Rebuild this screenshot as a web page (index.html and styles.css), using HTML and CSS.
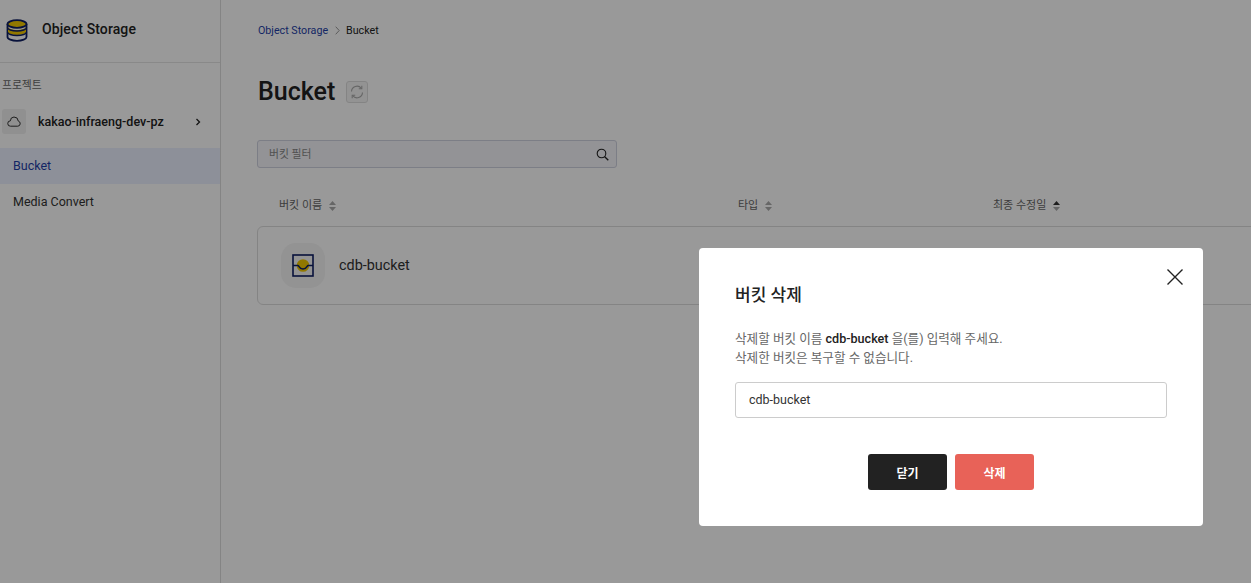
FILE: index.html
```html
<!DOCTYPE html>
<html lang="ko">

<head>
    <meta charset="UTF-8">
    <meta name="viewport" content="width=device-width, initial-scale=1.0">
    <title>Bucket</title>
    <link rel="stylesheet" href="styles.css">
</head>

<body>
    <div class="layout">
        <!-- Sidebar -->
        <aside class="sidebar">
            <div class="service">
                <svg class="service-icon" width="22" height="23" viewBox="0 0 22 23">
                    <path d="M1.500 5v13c0 2 4.300 3.800 9.500 3.800s9.500-1.800 9.500-3.800V5" fill="#fff" stroke="#0e1f63" stroke-width="1.800"/>
                    <path d="M2 8c1 2 5 3 9 3s8-1 9-3v5c-1 2-5 3-9 3s-9-1-9-3z" fill="#f2c800"/>
                    <path d="M1.500 13c0 2 4.300 3.500 9.500 3.500s9.500-1.500 9.500-3.500" fill="none" stroke="#0e1f63" stroke-width="1.500"/>
                    <path d="M1.500 8.500c0 2 4.300 3.500 9.500 3.500s9.500-1.500 9.500-3.500" fill="none" stroke="#0e1f63" stroke-width="1.500"/>
                    <ellipse cx="11" cy="5" rx="9.500" ry="3.800" fill="#f2c800" stroke="#0e1f63" stroke-width="1.800"/>
                </svg>
                <span>Object Storage</span>
            </div>
            <div class="project-label">프로젝트</div>
            <div class="project">
                <div class="project-icon">
                    <svg width="14" height="11" viewBox="0 0 14 11">
                        <path d="M3.500 10.200h7.200a2.600 2.600 0 0 0 .6-5.100A4.400 4.400 0 0 0 7 1a3.800 3.800 0 0 0-3.600 3.800A2.700 2.700 0 0 0 3.500 10.200z" fill="none" stroke="#333" stroke-width="1"/>
                    </svg>
                </div>
                <span class="project-name">kakao-infraeng-dev-pz</span>
                <svg class="project-arrow" width="6" height="8" viewBox="0 0 6 8">
                    <path d="M1.500 1l3 3-3 3" fill="none" stroke="#222" stroke-width="1.300"/>
                </svg>
            </div>
            <a class="menu-item active">Bucket</a>
            <a class="menu-item">Media Convert</a>
        </aside>

        <!-- Main -->
        <main class="content">
            <div class="breadcrumb">
                <span class="crumb-link">Object Storage</span>
                <svg width="5" height="9" viewBox="0 0 5 9">
                    <path d="M.7 .7l3.500 3.800-3.500 3.800" fill="none" stroke="#999" stroke-width="1"/>
                </svg>
                <span>Bucket</span>
            </div>

            <div class="title-row">
                <h1>Bucket</h1>
                <button class="refresh">
                    <svg width="14" height="14" viewBox="0 0 14 14">
                        <path d="M1.500 6.500A5.500 5.500 0 0 1 11.300 3.300M12.500 7.500A5.500 5.500 0 0 1 2.700 10.700" fill="none" stroke="#aaa" stroke-width="1.100"/>
                        <path d="M11.800 .8v3h-3M2.200 13.200v-3h3" fill="none" stroke="#aaa" stroke-width="1.100"/>
                    </svg>
                </button>
            </div>

            <div class="filter">
                <span class="filter-text">버킷 필터</span>
                <svg width="13" height="13" viewBox="0 0 13 13">
                    <circle cx="5.500" cy="5.500" r="4.300" fill="none" stroke="#222" stroke-width="1.100"/>
                    <path d="M8.700 8.700l3.600 3.600" stroke="#222" stroke-width="1.300"/>
                </svg>
            </div>

            <div class="table-head">
                <div class="col-title">버킷 이름
                    <svg class="sort" width="7" height="10" viewBox="0 0 7 10">
                        <path d="M3.500 0L7 4H0z" fill="#aaa"/>
                        <path d="M3.500 10L7 6H0z" fill="#aaa"/>
                    </svg>
                </div>
                <div class="col-title">타입
                    <svg class="sort" width="7" height="10" viewBox="0 0 7 10">
                        <path d="M3.500 0L7 4H0z" fill="#aaa"/>
                        <path d="M3.500 10L7 6H0z" fill="#aaa"/>
                    </svg>
                </div>
                <div class="col-title">최종 수정일
                    <svg class="sort" width="7" height="10" viewBox="0 0 7 10">
                        <path d="M3.500 0L7 4H0z" fill="#333"/>
                        <path d="M3.500 10L7 6H0z" fill="#aaa"/>
                    </svg>
                </div>
            </div>

            <div class="bucket-card">
                <div class="bucket-icon">
                    <svg width="22" height="23" viewBox="0 0 22 23">
                        <circle cx="11" cy="11.500" r="6.300" fill="#f2c800"/>
                        <rect x="1" y="1" width="20" height="21" fill="none" stroke="#0e1f63" stroke-width="1.600"/>
                        <path d="M1 11.500h5c1 0 1 3.500 5 3.500s4-3.500 5-3.500h5" fill="none" stroke="#0e1f63" stroke-width="1.600"/>
                    </svg>
                </div>
                <span class="bucket-name">cdb-bucket</span>
            </div>
        </main>
    </div>

    <!-- Delete dialog -->
    <div class="overlay">
        <div class="modal">
            <button class="modal-close">
                <svg width="16" height="16" viewBox="0 0 16 16">
                    <path d="M.5 .5l15 15M15.500 .5l-15 15" stroke="#222" stroke-width="1.400"/>
                </svg>
            </button>
            <h2>버킷 삭제</h2>
            <p class="modal-text">삭제할 버킷 이름 <strong>cdb-bucket</strong> 을(를) 입력해 주세요.<br>삭제한 버킷은 복구할 수 없습니다.</p>
            <div class="modal-input">cdb-bucket</div>
            <div class="modal-buttons">
                <button class="btn btn-dark">닫기</button>
                <button class="btn btn-red">삭제</button>
            </div>
        </div>
    </div>
</body>

</html>
```

FILE: styles.css
```css
/* General Styles */
* {
    box-sizing: border-box;
}

body {
    margin: 0;
    height: 583px;
    overflow: hidden;
    background: #fff;
    color: #222;
    font-family: 'Roboto', 'Noto Sans CJK KR', sans-serif;
}

.layout {
    display: flex;
    height: 583px;
}

/* Sidebar */
.sidebar {
    width: 221px;
    flex-shrink: 0;
    border-right: 1px solid #ddd;
}

.service {
    display: flex;
    align-items: center;
    height: 63px;
    padding: 0 0 4px 6px;
    gap: 14px;
    border-bottom: 1px solid #e4e4e4;
    font-size: 14px;
    font-weight: 500;
    letter-spacing: 0.1px;
}

.service-icon {
    margin-top: 2px;
}

.project-label {
    margin-top: 16px;
    padding-left: 2px;
    font-size: 10.800px;
    line-height: 14px;
    color: #666;
}

.project {
    display: flex;
    align-items: center;
    height: 25px;
    margin: 16px 0 14px;
    padding-left: 2px;
}

.project-icon {
    display: flex;
    align-items: center;
    justify-content: center;
    width: 24px;
    height: 25px;
    border-radius: 3px;
    background: #f0f0f0;
}

.project-name {
    margin-left: 12px;
    width: 157px;
    font-size: 12.500px;
    font-weight: 500;
}

.menu-item {
    display: block;
    height: 36px;
    padding-left: 13px;
    font-size: 12.500px;
    line-height: 35px;
    color: #333;
}

.menu-item.active {
    background: #ebf0ff;
    color: #1f3fa8;
}

/* Main */
.content {
    flex: 1;
    min-width: 0;
    padding: 23px 0 0 36px;
    overflow: hidden;
}

.breadcrumb {
    display: flex;
    align-items: center;
    gap: 6.500px;
    height: 14px;
    padding-left: 1px;
    font-size: 10.700px;
}

.crumb-link {
    color: #1f3fa8;
}

.title-row {
    display: flex;
    align-items: center;
    gap: 11px;
    margin-top: 32px;
    height: 44px;
}

h1 {
    margin: 0;
    padding-left: 1px;
    font-size: 25px;
    font-weight: 500;
}

.refresh {
    display: flex;
    align-items: center;
    justify-content: center;
    width: 22px;
    height: 22px;
    margin-top: 2px;
    padding: 0;
    border: 1px solid #ddd;
    border-radius: 3px;
    background: #f5f5f5;
}

.filter {
    display: flex;
    align-items: center;
    justify-content: space-between;
    width: 360px;
    height: 28px;
    margin-top: 27px;
    padding: 0 7px 0 11px;
    border: 1px solid #cfd2e0;
    border-radius: 3px;
    background: #f5f5fa;
    font-size: 10.800px;
    color: #888;
}

.filter-text {
    margin-top: -3px;
}

.table-head {
    display: grid;
    grid-template-columns: 459px 255px 1fr;
    height: 58px;
    padding: 28px 0 0 22px;
}

.col-title {
    display: flex;
    align-items: center;
    gap: 7px;
    height: 16px;
    font-size: 11px;
    color: #666;
}

.sort {
    margin-top: 4px;
}

.bucket-card {
    display: flex;
    align-items: center;
    gap: 14px;
    margin-right: -8px;
    height: 79px;
    padding-left: 23px;
    border: 1px solid #ddd;
    border-radius: 6px;
    font-size: 14.400px;
    color: #333;
}

.bucket-name {
    margin-top: -1px;
}

.bucket-icon {
    display: flex;
    align-items: center;
    justify-content: center;
    width: 44px;
    height: 45px;
    border-radius: 15px;
    background: #f5f5f5;
}

/* Delete dialog */
.overlay {
    position: fixed;
    inset: 0;
    background: rgba(0, 0, 0, 0.4);
}

.modal {
    position: absolute;
    left: 699px;
    top: 248px;
    width: 504px;
    height: 278px;
    padding: 33px 36px 0;
    border-radius: 4px;
    background: #fff;
}

.modal-close {
    position: absolute;
    top: 21px;
    right: 20px;
    width: 16px;
    height: 16px;
    padding: 0;
    border: 0;
    background: none;
}

h2 {
    margin: 0;
    font-size: 17px;
    line-height: 28px;
    font-weight: 500;
}

.modal-text {
    margin: 20px 0 0;
    font-size: 12.600px;
    line-height: 19px;
    color: #666;
}

.modal-text strong {
    font-weight: 500;
    color: #222;
}

.modal-input {
    height: 36px;
    margin-top: 15px;
    padding-left: 13px;
    border: 1px solid #ccc;
    border-radius: 3px;
    font-size: 12.500px;
    line-height: 33px;
    color: #333;
}

.modal-buttons {
    display: flex;
    justify-content: center;
    gap: 8px;
    margin-top: 36px;
}

.btn {
    width: 79px;
    height: 36px;
    padding: 0;
    border: 0;
    border-radius: 3px;
    font-family: inherit;
    font-size: 12px;
    font-weight: 700;
    color: #fff;
}

.btn-dark {
    background: #222;
}

.btn-red {
    background: #e86258;
}
```
